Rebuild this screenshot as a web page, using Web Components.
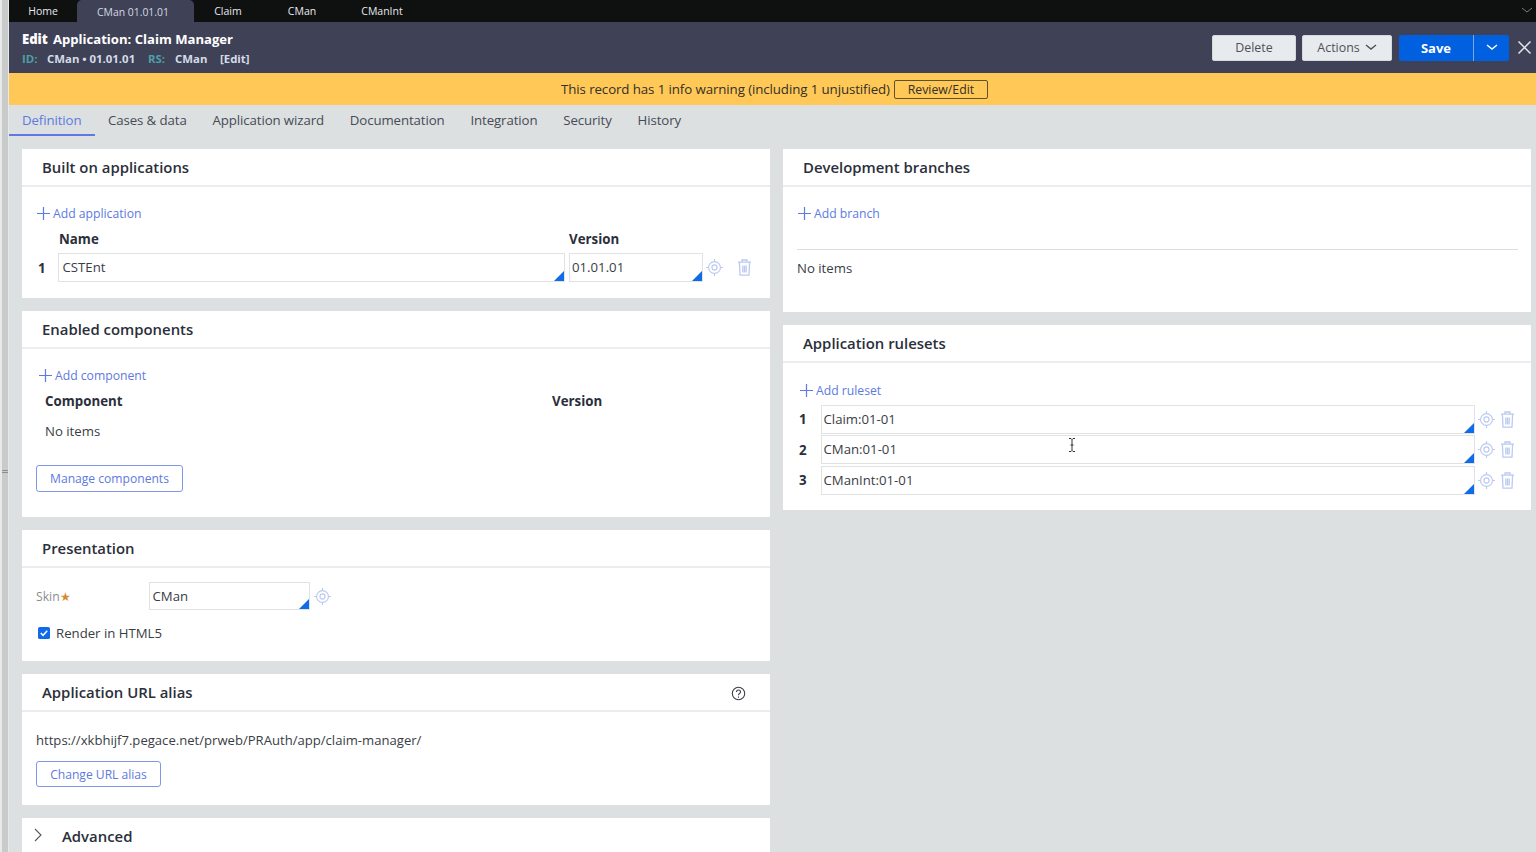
<!DOCTYPE html>
<html><head><meta charset="utf-8"><title>Application: Claim Manager</title>
<style>
html,body{margin:0;height:852px;overflow:hidden;background:#dce0e1;font-family:"Open Sans","Liberation Sans",sans-serif;color:#2b2f3a}
</style></head><body>
<pega-app></pega-app>
<script>
const gear=`<svg width="17" height="17" viewBox="0 0 16 16" fill="none" stroke="#bccaf0" stroke-width="1.1"><circle cx="8" cy="8" r="5.6"/><circle cx="8" cy="8" r="2.4"/><path d="M8 0v2.4M8 13.6V16M0 8h2.4M13.6 8H16"/></svg>`;
const trash=`<svg width="15" height="17" viewBox="0 0 15 17" fill="none" stroke="#bccaf0" stroke-width="1.3"><path d="M1 3.2h13M5 3V1h5v2M2.4 3.2l.6 13h9l.6-13M5.8 6.5v7M7.5 6.5v7M9.2 6.5v7"/></svg>`;
function def(name,css,html){
  customElements.define(name,class extends HTMLElement{
    connectedCallback(){
      if(this.shadowRoot)return;
      const r=this.attachShadow({mode:'open'});
      r.innerHTML=`<style>${css}</style>${typeof html==='function'?html(this):html}`;
    }
  });
}

def('top-tabs',`:host{display:flex;height:22px;background:#0f1110;color:#e6e8ee;font-size:10.5px;position:relative}
.t{display:flex;align-items:center;justify-content:center;padding-bottom:1px;box-sizing:border-box}
.a{background:#3f4257;border-radius:5px 5px 0 0;color:#d5d8e2;padding:2px 5px 0 0;font-size:10.4px}
svg{position:absolute;right:3px;top:7px}`,
`<div class="t" style="width:68px">Home</div><div class="t a" style="width:117px">CMan 01.01.01</div><div class="t" style="width:68px">Claim</div><div class="t" style="width:80px">CMan</div><div class="t" style="width:80px">CManInt</div>
<svg width="12" height="7" viewBox="0 0 12 7" fill="none" stroke="#777b80"><path d="M1 1l5 4 5-4"/></svg>`);

def('rule-header',`:host{display:flex;justify-content:space-between;height:51px;background:#3f4257;box-sizing:border-box;padding:0 4px 0 13px;color:#fff}
.l{padding-top:8px}.h{font-size:13.1px;font-weight:700;line-height:19px;white-space:nowrap}.h b{margin-right:5px}
.s{display:flex;font-size:11.4px;font-weight:700;color:#d6dbe8;line-height:14px;margin-top:3px;white-space:nowrap}.s i{font-style:normal;color:#4f9ea6}
.r{display:flex;align-items:center}
.b{height:26px;border-radius:2px;box-sizing:border-box;display:flex;align-items:center;justify-content:center;font-size:12.4px;background:#e8ebed;color:#4d5159;border:1px solid #d5d8dc}
.sv{display:flex;width:110px;height:26px;margin-left:7px;background:#0060e0;border-radius:2px;color:#fff;font-size:13px;font-weight:700}
.sv div{display:flex;align-items:center;justify-content:center}
svg.x{margin-left:8px}`,
`<div class="l"><div class="h"><b>Edit</b>Application: Claim Manager</div><div class="s"><i style="width:25px">ID:</i><span style="width:101px">CMan • 01.01.01</span><i style="width:27px">RS:</i><span style="width:45px">CMan</span><span>[Edit]</span></div></div>
<div class="r"><div class="b" style="width:84px">Delete</div><div class="b" style="width:90px;margin-left:6px;gap:5px">Actions <svg width="12" height="7" viewBox="0 0 12 7" fill="none" stroke="#4d5159" stroke-width="1.4"><path d="M1 1l5 4 5-4"/></svg></div>
<div class="sv"><div style="width:74px;border-right:1px solid #7aa5e8">Save</div><div style="flex:1"><svg width="12" height="7" viewBox="0 0 12 7" fill="none" stroke="#fff" stroke-width="1.4"><path d="M1 1l5 4 5-4"/></svg></div></div>
<svg class="x" width="15" height="15" viewBox="0 0 15 15" fill="none" stroke="#e4e6ea" stroke-width="1.5"><path d="M1.5 1.5l12 12M13.5 1.5l-12 12"/></svg></div>`);

def('warn-bar',`:host{display:flex;height:32px;background:#ffc857;align-items:center;justify-content:center;font-size:13.3px;color:#32302a;letter-spacing:-.1px;padding-left:4px;box-sizing:border-box}
.b{margin-left:4px;width:94px;height:19px;box-sizing:border-box;border:1px solid #5c5230;border-radius:2px;font-size:12.3px;display:flex;align-items:center;justify-content:center;letter-spacing:0}`,
`This record has 1 info warning (including 1 unjustified)<div class="b">Review/Edit</div>`);

def('rule-tabs',`:host{display:flex;height:44px;box-sizing:border-box;font-size:13.25px;color:#474b55;letter-spacing:-.1px}
.t{height:31px;display:flex;align-items:center;box-sizing:border-box;padding-bottom:2px;margin-left:25.8px}
.a{color:#5d7ae0;width:86px;padding-left:13px;border-bottom:2px solid #5d7ae0;margin:0;padding-bottom:0}`,
`<div class="t a">Definition</div><div class="t" style="margin-left:13px">Cases &amp; data</div><div class="t">Application wizard</div><div class="t">Documentation</div><div class="t">Integration</div><div class="t">Security</div><div class="t">History</div>`);

def('pega-panel',`:host{display:block;background:#fff;margin-bottom:13px}
.h{height:38px;box-sizing:border-box;border-bottom:2px solid #ecedee;padding:0 20px;display:flex;align-items:center;justify-content:space-between;font-size:14.9px;font-weight:600;color:#2b2f3a}
.b{padding:0 14px;box-sizing:border-box;display:flow-root}`,
e=>`<div class="h"><span>${e.getAttribute('title')}</span><slot name="aside"></slot></div><div class="b" style="height:${e.getAttribute('body')}px"><slot></slot></div>`);

def('add-link',`:host{display:flex;align-items:center;font-size:12.2px;color:#5d7ae0;gap:3px}`,
`<svg width="13" height="13" viewBox="0 0 13 13" stroke="#5d7ae0" stroke-width="1.2"><path d="M6.5 0v13M0 6.5h13"/></svg><span><slot></slot></span>`);

def('pega-input',`:host{display:block;position:relative;height:29px;box-sizing:border-box;border:1px solid #e0e2e3;background:#fff;font-size:13.2px;color:#3a3d45;padding:0 2.5px;line-height:27px}
:host::after{content:"";position:absolute;right:0;bottom:0;border-style:solid;border-width:0 0 10px 10px;border-color:transparent transparent #0f6be8 transparent}`,`<slot></slot>`);

def('pega-row',`:host{display:flex;align-items:center}
.i{display:flex;align-items:center}`,
e=>{const i=e.getAttribute('icons');return `<slot></slot>`+(i?`<span class="i" style="margin-left:${e.getAttribute('ml')||3}px;gap:${e.getAttribute('gap')||5}px">${i.includes('g')?gear:''}${i.includes('t')?trash:''}</span>`:'');});

def('outline-btn',`:host{display:inline-flex;align-items:center;justify-content:center;height:27px;box-sizing:border-box;border:1px solid #7f97e6;border-radius:3px;font-size:12.1px;color:#5d7ae0;background:#fff}`,`<slot></slot>`);

def('side-strip',`:host{display:block;width:9px;height:852px;background:#e8e9e9;position:relative;flex:none}
:host::before{content:"";position:absolute;left:2px;top:0;width:6px;bottom:0;background:#c9cbcb}
i{position:absolute;left:2px;top:470px;width:6px;height:3px;border:solid #8d8f8f;border-width:1px 0;box-sizing:border-box}`,`<i></i>`);

def('pega-app',`:host{display:flex;height:852px;overflow:hidden;position:relative}
.m{flex:1;min-width:0}
.c{display:grid;grid-template-columns:748px 748px;column-gap:13px;padding-left:13px}
.bold{font-size:13.3px;font-weight:700;color:#2b2f3a}
.n{font-size:13.3px;font-weight:700;color:#2b2f3a;padding-left:2px;box-sizing:border-box}
.t{font-size:13.2px;color:#3a3d45}
.cur{position:absolute;left:1068px;top:438px}
`,
`<side-strip></side-strip><div class="m">
<top-tabs></top-tabs><rule-header></rule-header><warn-bar></warn-bar><rule-tabs></rule-tabs>
<div class="c"><div>
<pega-panel title="Built on applications" body="111">
 <add-link style="margin:19px 0 0 1px;height:14px">Add application</add-link>
 <div style="display:flex;margin:9px 0 0 23px;height:20px;align-items:center" class="bold"><span style="width:510px">Name</span><span>Version</span></div>
 <pega-row icons="gt" gap="14" style="margin-top:4px"><span class="n" style="width:22px">1</span><pega-input style="width:507px;padding-left:3.5px">CSTEnt</pega-input><pega-input style="width:134px;margin-left:4px;padding-left:2px">01.01.01</pega-input></pega-row>
</pega-panel>
<pega-panel title="Enabled components" body="168">
 <add-link style="margin:19px 0 0 3px;height:14px">Add component</add-link>
 <div style="display:flex;margin:9px 0 0 9px;height:20px;align-items:center" class="bold"><span style="width:507px">Component</span><span>Version</span></div>
 <div class="t" style="margin:10px 0 0 9px;height:20px;line-height:20px">No items</div>
 <outline-btn style="width:147px;margin-top:24px">Manage components</outline-btn>
</pega-panel>
<pega-panel title="Presentation" body="93">
 <div style="display:flex;align-items:center;margin-top:14px"><span style="width:113px;font-size:12.2px;color:#8a8d90">Skin<span style="color:#d88a2e">★</span></span><pega-row icons="g" ml="4"><pega-input style="width:161px;height:28px">CMan</pega-input></pega-row></div>
 <div class="t" style="display:flex;align-items:center;margin-top:13px;gap:6px;height:20px"><svg width="12" height="12" viewBox="0 0 13 13" style="margin-left:2px"><rect width="13" height="13" rx="2" fill="#0f6be8"/><path d="M3 6.5l2.5 2.5L10 4" fill="none" stroke="#fff" stroke-width="1.6"/></svg>Render in HTML5</div>
</pega-panel>
<pega-panel title="Application URL alias" body="93">
 <svg slot="aside" width="15" height="15" viewBox="0 0 15 15" fill="none" stroke="#3a3d45" stroke-width="1.1" style="margin:2px 4px 0 0"><circle cx="7.5" cy="7.5" r="6.2"/><path d="M5.5 6c0-2.6 4-2.6 4 0 0 1.4-2 1.5-2 3.2M7.5 10.4v1.3"/></svg>
 <div class="t" style="margin-top:18px;line-height:20px;height:20px;font-size:13.1px">https://xkbhijf7.pegace.net/prweb/PRAuth/app/claim-manager/</div>
 <outline-btn style="width:125px;margin-top:11px;height:26px">Change URL alias</outline-btn>
</pega-panel>
<div style="background:#fff;height:40px;display:flex;align-items:flex-start;font-size:14.9px;font-weight:600;padding:8px 0 0 12px;box-sizing:border-box;color:#2b2f3a"><svg width="8" height="14" viewBox="0 0 8 14" fill="none" stroke="#55585f" stroke-width="1.1" style="margin:2px 20px 0 0"><path d="M1 1l6 6-6 6"/></svg>Advanced</div>
</div><div>
<pega-panel title="Development branches" body="125">
 <add-link style="margin:19px 0 0 1px;height:14px">Add branch</add-link>
 <div style="border-bottom:1px solid #dcdedf;height:29px;margin-right:-1px"></div>
 <div class="t" style="margin-top:8px;height:20px;line-height:20px">No items</div>
</pega-panel>
<pega-panel title="Application rulesets" body="147">
 <add-link style="margin:20px 0 0 3px;height:14px">Add ruleset</add-link>
 <pega-row icons="gt" style="margin-top:7.5px"><span class="n" style="width:24px">1</span><pega-input style="width:654px;padding-left:1.5px">Claim:01-01</pega-input></pega-row>
 <pega-row icons="gt" style="margin-top:1.6px"><span class="n" style="width:24px">2</span><pega-input style="width:654px;padding-left:1.5px">CMan:01-01</pega-input></pega-row>
 <pega-row icons="gt" style="margin-top:1.6px"><span class="n" style="width:24px">3</span><pega-input style="width:654px;padding-left:1.5px">CManInt:01-01</pega-input></pega-row>
</pega-panel>
</div></div></div>
<svg class="cur" width="8" height="14" viewBox="0 0 8 14" fill="none" stroke="#333" stroke-width="1"><path d="M1 .5h2l1 1 1-1h2M4 1.5v11M1 13.5h2l1-1 1 1h2M2.5 7h3"/></svg>`);
</script>
</body></html>
